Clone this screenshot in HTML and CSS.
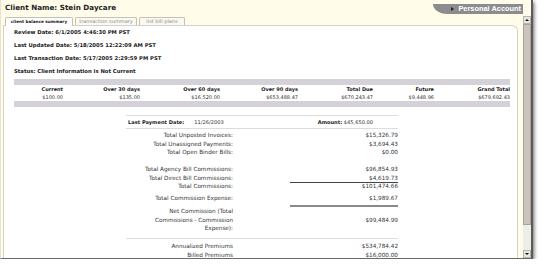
FILE: index.html
```html
<!DOCTYPE html>
<html>
<head>
<meta charset="utf-8">
<link rel="stylesheet" href="styles.css">
</head>
<body>
<div class="window">
  <div class="main">
    <div class="head">
      <div class="title">Client Name: Stein Daycare</div>
      <div class="acct"><span class="tri"></span>Personal Account</div>
    </div>
    <div class="tabs">
      <div class="tab active w1">client balance summary</div>
      <div class="tab w2">transaction summary</div>
      <div class="tab w3">list bill plans</div>
    </div>
    <div class="panel">
      <div class="info">
        <div>Review Date: 6/1/2005 4:46:30 PM PST</div>
        <div>Last Updated Date: 5/18/2005 12:22:09 AM PST</div>
        <div>Last Transaction Date: 5/17/2005 2:29:59 PM PST</div>
        <div>Status: Client Information is Not Current</div>
      </div>
      <div class="bar first"></div>
      <div class="aging">
        <div class="h">Current</div>
        <div class="h">Over 30 days</div>
        <div class="h">Over 60 days</div>
        <div class="h">Over 90 days</div>
        <div class="h">Total Due</div>
        <div class="h">Future</div>
        <div class="h">Grand Total</div>
        <div>$100.00</div>
        <div>$135.00</div>
        <div>$16,520.00</div>
        <div>$653,488.47</div>
        <div>$670,243.47</div>
        <div>$9,448.96</div>
        <div>$679,692.43</div>
      </div>
      <div class="bar"></div>
      <div class="summary">
        <div class="pay">
          <span class="b">Last Payment Date:</span>
          <span class="pdate">11/26/2003</span>
          <span class="amt"><span class="b">Amount:</span> $45,650.00</span>
        </div>
        <div class="rows">
          <div class="row"><div class="lab">Total Unposted Invoices:</div><div class="val">$15,326.79</div></div>
          <div class="row"><div class="lab">Total Unassigned Payments:</div><div class="val">$3,694.43</div></div>
          <div class="row"><div class="lab">Total Open Binder Bills:</div><div class="val">$0.00</div></div>
          <div class="row"></div>
          <div class="row"><div class="lab">Total Agency Bill Commissions:</div><div class="val">$96,854.93</div></div>
          <div class="row"><div class="lab">Total Direct Bill Commissions:</div><div class="val"><span class="ul">$4,619.73</span></div></div>
          <div class="row"><div class="lab">Total Commissions:</div><div class="val">$101,474.66</div></div>
          <div class="spacer"></div>
          <div class="row"><div class="lab">Total Commission Expense:</div><div class="val">$1,989.67</div></div>
          <div class="rule2"><span></span></div>
          <div class="row net"><div class="lab">Net Commission (Total<br>Commissions - Commission<br>Expense):</div><div class="val">$99,484.99</div></div>
          <div class="rule1"></div>
          <div class="row"><div class="lab">Annualized Premiums</div><div class="val">$534,784.42</div></div>
          <div class="row"><div class="lab">Billed Premiums</div><div class="val">$16,000.00</div></div>
        </div>
      </div>
    </div>
  </div>
  <div class="scroll">
    <div class="btn"><span class="up"></span></div>
    <div class="thumb"></div>
    <div class="track"></div>
    <div class="btn"><span class="down"></span></div>
  </div>
</div>
</body>
</html>
```
FILE: styles.css
```css
html, body {
  margin: 0;
  padding: 0;
  background: #ffffff;
}
body {
  font-family: "DejaVu Sans", Verdana, sans-serif;
  color: #222;
}
.window {
  width: 530px;
  height: 258px;
  display: flex;
  background: #fffdea;
  border-left: 1px solid #e6e3d2;
  border-right: 2px solid #5a5a5a;
  border-bottom: 1px solid #6a6a6a;
  box-shadow: 1px 2px 4px rgba(0, 0, 0, 0.6);
  overflow: hidden;
}
.main {
  width: 522px;
  display: flex;
  flex-direction: column;
}
.head {
  height: 17px;
  display: flex;
  align-items: flex-start;
}
.title {
  font-weight: bold;
  font-size: 7.2px;
  line-height: 16px;
  padding-left: 4px;
  color: #1e1e28;
}
.acct {
  margin-left: auto;
  margin-top: 4px;
  height: 10px;
  width: 88px;
  background: #8c8c8e;
  border-bottom-left-radius: 14px 10px;
  color: #fff;
  font-family: "Liberation Sans", Arial, sans-serif;
  font-weight: bold;
  font-size: 7.4px;
  line-height: 10px;
  display: flex;
  align-items: center;
  justify-content: flex-end;
  padding-right: 2px;
}
.tri {
  width: 0;
  height: 0;
  border-left: 3px solid #222;
  border-top: 2px solid transparent;
  border-bottom: 2px solid transparent;
  margin-right: 4px;
}
.tabs {
  display: flex;
  gap: 2px;
  margin-left: 4px;
  height: 8px;
}
.tab {
  height: 8px;
  box-sizing: border-box;
  border: 1px solid #c4c2b8;
  border-bottom: none;
  border-radius: 2px 2px 0 0;
  background: #fbfaf2;
  color: #8a8a8a;
  font-size: 5px;
  line-height: 7px;
  text-align: center;
  white-space: nowrap;
  overflow: hidden;
}
.tab.active {
  background: #fff;
  color: #111;
  font-weight: bold;
  font-size: 4.2px;
  height: 9px;
  margin-bottom: -1px;
  position: relative;
  z-index: 1;
}
.w1 { width: 68px; }
.w2 { width: 62px; }
.w3 { width: 46px; }
.panel {
  flex: 1;
  margin-left: 2px;
  width: 513px;
  background: #fff;
  border: 1px solid #d4d2c6;
  border-bottom: none;
  border-top-right-radius: 6px;
  overflow: hidden;
}
.info {
  padding-left: 10px;
  font-weight: bold;
  font-size: 5.3px;
  line-height: 13px;
  color: #1a1a1a;
}
.bar {
  margin-left: 10px;
  width: 496px;
  height: 6px;
  background: #d4d2d8;
}
.bar.first {
  margin-top: 1px;
}
.aging {
  margin-left: 10px;
  width: 496px;
  display: grid;
  grid-template-columns: 49px 77px 80px 78px 75px 61px 76px;
  grid-auto-rows: 8px;
  font-size: 5px;
  line-height: 8px;
  text-align: right;
  color: #333;
}
.aging .h {
  font-weight: bold;
  color: #1a1a1a;
}
.summary {
  margin-left: 122px;
  margin-top: 8px;
  width: 272px;
  font-size: 5.7px;
  color: #333;
}
.pay {
  border-top: 1px solid #dcdcdc;
  border-bottom: 1px solid #dcdcdc;
  height: 12px;
  display: flex;
  align-items: center;
  font-size: 5.1px;
  padding-left: 2px;
}
.b {
  font-weight: bold;
  color: #1a1a1a;
}
.pdate {
  margin-left: 10px;
}
.amt {
  margin-left: auto;
  margin-right: 25px;
}
.rows {
  padding-top: 2px;
}
.row {
  display: flex;
  height: 8.5px;
  line-height: 8.5px;
}
.lab {
  width: 107px;
  text-align: right;
}
.val {
  flex: 1;
  text-align: right;
}
.ul {
  display: inline-block;
  width: 108px;
  border-bottom: 1px solid #444;
  line-height: 7.5px;
}
.spacer {
  height: 3.5px;
}
.rule2 {
  display: flex;
  justify-content: flex-end;
  margin-top: 2.5px;
}
.rule2 span {
  width: 108px;
  height: 2px;
  background: #8a8a8a;
}
.row.net {
  height: 25.5px;
  align-items: center;
}
.row.net .lab {
  line-height: 8.5px;
}
.rule1 {
  margin-top: 5.5px;
  margin-bottom: 3px;
  height: 1px;
  background: #dcdcdc;
}
.scroll {
  width: 8px;
  margin-top: 16px;
  display: flex;
  flex-direction: column;
  background: #eceae4;
}
.btn {
  height: 8px;
  box-sizing: border-box;
  border: 1px solid #b8b4ac;
  background: #e8e6e0;
  display: flex;
  align-items: center;
  justify-content: center;
}
.up, .down {
  width: 0;
  height: 0;
  border-left: 2px solid transparent;
  border-right: 2px solid transparent;
}
.up { border-bottom: 2px solid #111; }
.down { border-top: 2px solid #111; }
.thumb {
  height: 201px;
  box-sizing: border-box;
  border: 1px solid #a9a39c;
  background: #cbc4bd;
}
.track {
  flex: 1;
  background: #efede8;
}
```
